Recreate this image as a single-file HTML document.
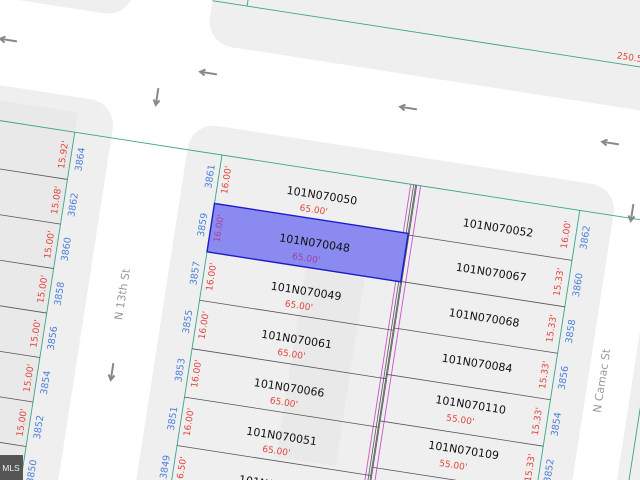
<!DOCTYPE html>
<html><head><meta charset="utf-8"><style>
html,body{margin:0;padding:0;background:#fff;overflow:hidden;width:640px;height:480px}
svg{display:block}
text{font-family:"DejaVu Sans","Liberation Sans",sans-serif}
.id{font-size:11px;fill:#111;text-anchor:middle;dominant-baseline:central}
.r{font-size:9px;fill:#e0443c;text-anchor:middle;dominant-baseline:central}
.b{font-size:9.5px;fill:#4a80d8;text-anchor:middle;dominant-baseline:central}
.st{font-size:11px;fill:#9a9a9a;text-anchor:middle;dominant-baseline:central}
.g{stroke:#3aa58a;stroke-width:0.9;fill:none}
.l{stroke:#555;stroke-width:0.8;fill:none}
.m{stroke:#d050d0;stroke-width:0.9;fill:none}
.ar{stroke:#888;stroke-width:2;fill:none}
</style></head><body>
<svg width="640" height="480" viewBox="0 0 640 480" xmlns="http://www.w3.org/2000/svg">
<rect width="640" height="480" fill="#fff"/>
<g transform="translate(222,155) rotate(8.8)">
 <rect x="-800" y="-900" width="688" height="778" rx="26" fill="#efefef"/>
 <rect x="-33" y="-900" width="1200" height="792" rx="26" fill="#efefef"/>
 <rect x="-800" y="-35" width="688" height="900" rx="26" fill="#efefef"/>
 <rect x="-35" y="-28" width="431" height="900" rx="26" fill="#efefef"/>
 <rect x="440" y="-28" width="400" height="900" rx="26" fill="#efefef"/>
 <rect x="-400" y="-20" width="251" height="400" fill="#e9e9e9"/>
 <rect x="100" y="100" width="60" height="190" fill="#e9e9e9"/>
 <line class="g" x1="-800" y1="0" x2="900" y2="0"/>
 <line class="g" x1="-33" y1="-151" x2="900" y2="-151"/>
 <line class="g" x1="2" y1="-151" x2="2" y2="-400"/>
 <line class="g" x1="-149" y1="0" x2="-149" y2="600"/>
 <line class="g" x1="0" y1="0" x2="0" y2="600"/>
 <line class="g" x1="362" y1="0" x2="362" y2="600"/>
 <line class="g" x1="452" y1="0" x2="452" y2="600"/>
 <line class="m" x1="191" y1="0" x2="191" y2="600"/>
 <line class="l" x1="194" y1="0" x2="194" y2="600"/>
 <line class="l" x1="197" y1="0" x2="197" y2="600"/>
 <line class="m" x1="201" y1="0" x2="201" y2="600"/>
 <g class="l">
  <line x1="-400" y1="47.8" x2="-149" y2="47.8"/>
  <line x1="-400" y1="93" x2="-149" y2="93"/>
  <line x1="-400" y1="138" x2="-149" y2="138"/>
  <line x1="-400" y1="183" x2="-149" y2="183"/>
  <line x1="-400" y1="228" x2="-149" y2="228"/>
  <line x1="-400" y1="273" x2="-149" y2="273"/>
  <line x1="-400" y1="318" x2="-149" y2="318"/>
  <line x1="0" y1="49" x2="196" y2="49"/>
  <line x1="0" y1="98" x2="196" y2="98"/>
  <line x1="0" y1="147" x2="196" y2="147"/>
  <line x1="0" y1="196" x2="196" y2="196"/>
  <line x1="0" y1="245" x2="196" y2="245"/>
  <line x1="0" y1="294" x2="196" y2="294"/>
  <line x1="0" y1="343" x2="196" y2="343"/>
  <line x1="196" y1="0" x2="196" y2="343"/>
  <line x1="196" y1="50.6" x2="362" y2="50.6"/>
  <line x1="196" y1="97.6" x2="362" y2="97.6"/>
  <line x1="196" y1="144.6" x2="362" y2="144.6"/>
  <line x1="196" y1="191.6" x2="362" y2="191.6"/>
  <line x1="196" y1="238.6" x2="362" y2="238.6"/>
  <line x1="196" y1="285.6" x2="362" y2="285.6"/>
 </g>
 <rect x="0" y="49" width="196" height="49" fill="#8a8af0" stroke="#1c1ccc" stroke-width="1.4"/>
 <text class="id" x="105" y="25">101N070050</text>
 <text class="r" x="99" y="41">65.00'</text>
 <text class="id" x="105" y="73" fill="#1a1a5a">101N070048</text>
 <text class="r" x="99" y="90" style="fill:#a040a0">65.00'</text>
 <text class="id" x="104" y="122">101N070049</text>
 <text class="r" x="99" y="138">65.00'</text>
 <text class="id" x="102" y="171">101N070061</text>
 <text class="r" x="99" y="187">65.00'</text>
 <text class="id" x="102" y="220">101N070066</text>
 <text class="r" x="99" y="236">65.00'</text>
 <text class="id" x="102" y="269">101N070051</text>
 <text class="r" x="99" y="285">65.00'</text>
 <text class="id" x="102" y="318">101N070052</text>
 <text class="id" x="284" y="30">101N070052</text>
 <text class="id" x="284" y="75">101N070067</text>
 <text class="id" x="284" y="121">101N070068</text>
 <text class="id" x="284" y="167">101N070084</text>
 <text class="id" x="284" y="209">101N070110</text>
 <text class="r" x="276" y="226">55.00'</text>
 <text class="id" x="284" y="255">101N070109</text>
 <text class="r" x="276" y="272">55.00'</text>
 <g>
  <text class="r" transform="translate(-156,24) rotate(-90)">15.92'</text>
  <text class="b" transform="translate(-139,26) rotate(-90)">3864</text>
  <text class="r" transform="translate(-156,70) rotate(-90)">15.08'</text>
  <text class="b" transform="translate(-139,72) rotate(-90)">3862</text>
  <text class="r" transform="translate(-156,115) rotate(-90)">15.00'</text>
  <text class="b" transform="translate(-139,117) rotate(-90)">3860</text>
  <text class="r" transform="translate(-156,160) rotate(-90)">15.00'</text>
  <text class="b" transform="translate(-139,162) rotate(-90)">3858</text>
  <text class="r" transform="translate(-156,205) rotate(-90)">15.00'</text>
  <text class="b" transform="translate(-139,207) rotate(-90)">3856</text>
  <text class="r" transform="translate(-156,250) rotate(-90)">15.00'</text>
  <text class="b" transform="translate(-139,252) rotate(-90)">3854</text>
  <text class="r" transform="translate(-156,295) rotate(-90)">15.00'</text>
  <text class="b" transform="translate(-139,297) rotate(-90)">3852</text>
  <text class="b" transform="translate(-139,342) rotate(-90)">3850</text>
 </g>
 <g>
  <text class="b" transform="translate(-8,23) rotate(-90)">3861</text>
  <text class="r" transform="translate(9,24) rotate(-90)">16.00'</text>
  <text class="b" transform="translate(-8,72) rotate(-90)">3859</text>
  <text class="r" transform="translate(9,73) rotate(-90)" style="fill:#b0409a">16.00'</text>
  <text class="b" transform="translate(-8,121) rotate(-90)">3857</text>
  <text class="r" transform="translate(9,122) rotate(-90)">16.00'</text>
  <text class="b" transform="translate(-8,170) rotate(-90)">3855</text>
  <text class="r" transform="translate(9,171) rotate(-90)">16.00'</text>
  <text class="b" transform="translate(-8,219) rotate(-90)">3853</text>
  <text class="r" transform="translate(9,220) rotate(-90)">16.00'</text>
  <text class="b" transform="translate(-8,268) rotate(-90)">3851</text>
  <text class="r" transform="translate(9,269) rotate(-90)">16.00'</text>
  <text class="b" transform="translate(-8,317) rotate(-90)">3849</text>
  <text class="r" transform="translate(9,318) rotate(-90)">16.50'</text>
 </g>
 <g>
  <text class="r" transform="translate(353,26) rotate(-90)">16.00'</text>
  <text class="b" transform="translate(372,26) rotate(-90)">3862</text>
  <text class="r" transform="translate(353,74) rotate(-90)">15.33'</text>
  <text class="b" transform="translate(372,74) rotate(-90)">3860</text>
  <text class="r" transform="translate(353,121) rotate(-90)">15.33'</text>
  <text class="b" transform="translate(372,121) rotate(-90)">3858</text>
  <text class="r" transform="translate(353,168) rotate(-90)">15.33'</text>
  <text class="b" transform="translate(372,168) rotate(-90)">3856</text>
  <text class="r" transform="translate(353,215) rotate(-90)">15.33'</text>
  <text class="b" transform="translate(372,215) rotate(-90)">3854</text>
  <text class="r" transform="translate(353,262) rotate(-90)">15.33'</text>
  <text class="b" transform="translate(372,262) rotate(-90)">3852</text>
 </g>
 <text class="r" x="392" y="-158">250.58'</text>
 <text class="st" transform="translate(-77,153) rotate(-90)">N 13th St</text>
 <text class="st" transform="translate(410,165) rotate(-90)">N Camac St</text>
</g>
<g class="ar">
 <g transform="translate(8,40) rotate(8.8)"><line x1="-7" y1="0" x2="9" y2="0"/><path d="M-3,-3 L-8,0 L-3,3"/></g>
 <g transform="translate(208,73) rotate(8.8)"><line x1="-7" y1="0" x2="9" y2="0"/><path d="M-3,-3 L-8,0 L-3,3"/></g>
 <g transform="translate(408,108) rotate(8.8)"><line x1="-7" y1="0" x2="9" y2="0"/><path d="M-3,-3 L-8,0 L-3,3"/></g>
 <g transform="translate(610,143) rotate(8.8)"><line x1="-7" y1="0" x2="9" y2="0"/><path d="M-3,-3 L-8,0 L-3,3"/></g>
 <g transform="translate(157,97) rotate(8.8)"><line x1="0" y1="-9" x2="0" y2="7"/><path d="M-3,3 L0,8 L3,3"/></g>
 <g transform="translate(632,213) rotate(8.8)"><line x1="0" y1="-9" x2="0" y2="7"/><path d="M-3,3 L0,8 L3,3"/></g>
 <g transform="translate(112,372) rotate(8.8)"><line x1="0" y1="-9" x2="0" y2="7"/><path d="M-3,3 L0,8 L3,3"/></g>
</g>
<rect x="0" y="455" width="23" height="25" fill="#555"/>
<text x="11" y="471" font-size="8.5" fill="#eee" text-anchor="middle" style="font-family:'Liberation Sans',sans-serif">MLS</text>
</svg>
</body></html>
